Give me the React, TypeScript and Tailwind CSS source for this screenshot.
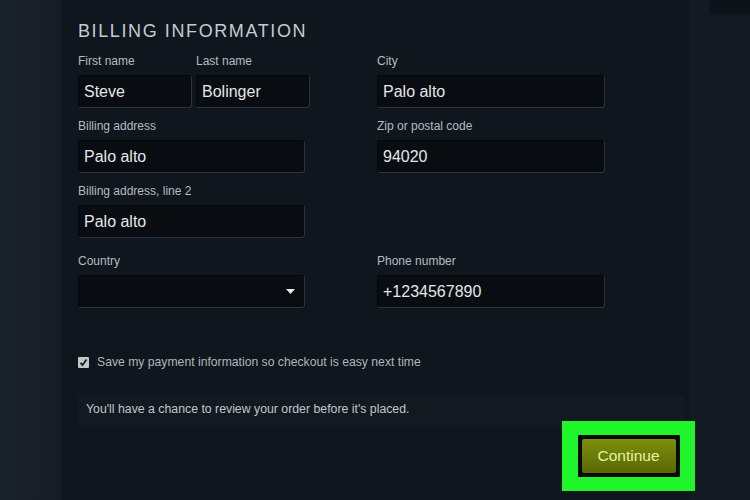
import React from 'react'

const font = { fontFamily: '"Liberation Sans", Arial, sans-serif' }

function Field({ label, value, className = 'w-[228px]' }: { label: string; value?: string; className?: string }) {
  return (
    <div className={className}>
      <div className="h-[14px] text-[12px] leading-[14px] text-[#b6bbc0]">{label}</div>
      <div className="mt-[7px] h-[33px] rounded-[3px] border border-[#05070a] border-r-[#2c333b] border-b-[#2c333b] bg-[#090c11] px-[5px] text-[16px] leading-[31px] text-[#e4e6e8]">
        {value}
      </div>
    </div>
  )
}

export default function App() {
  return (
    <div style={font} className="flex h-[500px] w-[750px] overflow-hidden bg-[#10161d]">
      {/* left strip */}
      <div className="w-[62px] shrink-0 bg-gradient-to-r from-[#1a222c] to-[#151c25]" />

      {/* main panel */}
      <div className="flex w-[628px] shrink-0 flex-col bg-[#10161d] pl-[16px] pt-[21px]">
        <h2 className="text-[18px] leading-[20px] tracking-[1.6px] text-[#c5cbd1]">BILLING INFORMATION</h2>

        <div className="mt-[13px] flex gap-[67px]">
          {/* left column */}
          <div className="flex w-[232px] flex-col">
            <div className="flex gap-[4px]">
              <Field label="First name" value="Steve" className="w-[114px]" />
              <Field label="Last name" value="Bolinger" className="w-[114px]" />
            </div>
            <Field label="Billing address" value="Palo alto" className="mt-[11px] w-[227px]" />
            <Field label="Billing address, line 2" value="Palo alto" className="mt-[11px] w-[227px]" />
            <div className="mt-[16px] w-[227px]">
              <div className="h-[14px] text-[12px] leading-[14px] text-[#b6bbc0]">Country</div>
              <div className="mt-[7px] flex h-[33px] items-center justify-end rounded-[3px] border border-[#05070a] border-r-[#2c333b] border-b-[#2c333b] bg-[#090c11] pr-[9px]">
                <svg width="9" height="5" viewBox="0 0 9 5">
                  <path d="M0 0h9L4.5 5z" fill="#e8eaec" />
                </svg>
              </div>
            </div>
          </div>

          {/* right column */}
          <div className="flex w-[228px] flex-col">
            <Field label="City" value="Palo alto" />
            <Field label="Zip or postal code" value="94020" className="mt-[11px] w-[228px]" />
            <div className="h-[65px]" />
            <Field label="Phone number" value="+1234567890" className="mt-[16px] w-[228px]" />
          </div>
        </div>

        <label className="mt-[46px] flex items-center gap-[8px] text-[12.2px] leading-[16px] text-[#b0b5ba]">
          <span className="flex h-[11px] w-[11px] items-center justify-center rounded-[1px] bg-[#c4c6c8]">
            <svg width="9" height="9" viewBox="0 0 9 9">
              <path d="M1.5 4.8l2 2.2 4-5.5" fill="none" stroke="#1a1d20" strokeWidth="1.8" />
            </svg>
          </span>
          Save my payment information so checkout is easy next time
        </label>

        <div className="mr-[6px] mt-[25px] h-[31px] bg-[#131920] pl-[8px] text-[12.3px] leading-[29px] text-[#c2c6ca]">
          You'll have a chance to review your order before it's placed.
        </div>

        <div className="relative z-10 -mr-[5px] -mt-[5px] flex justify-end">
          <div className="flex h-[70px] w-[133px] items-center justify-center bg-[#20f52c]">
            <div className="rounded-[1px] bg-[#07090a] p-[4px]">
              <button className="h-[34px] w-[94px] rounded-[2px] bg-gradient-to-b from-[#7e8f0c] to-[#586806] text-[15.5px] leading-[34px] text-[#e6f3a0]">
                Continue
              </button>
            </div>
          </div>
        </div>
      </div>

      {/* right panel */}
      <div className="flex flex-1 justify-end bg-[#131a23]">
        <div className="h-[15px] w-[40px] rounded-bl-[4px] bg-[#0e131a]" />
      </div>
    </div>
  )
}
